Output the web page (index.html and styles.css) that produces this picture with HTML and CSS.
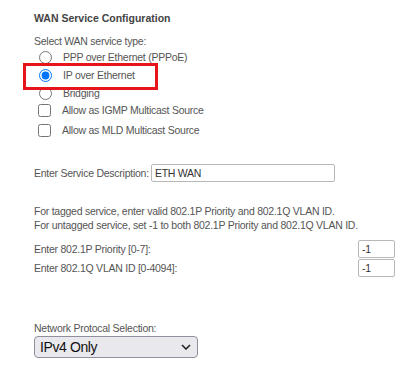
FILE: index.html
```html
<!DOCTYPE html>
<html>
<head>
<meta charset="utf-8">
<link rel="stylesheet" href="styles.css">
</head>
<body>
<div class="page">
  <div class="title">WAN Service Configuration</div>
  <div class="label-line">Select WAN service type:</div>
  <div class="options">
    <label class="opt radio-row"><input type="radio" name="svc"><span>PPP over Ethernet (PPPoE)</span></label>
    <label class="opt radio-row"><input type="radio" name="svc" checked><span>IP over Ethernet</span></label>
    <label class="opt radio-row"><input type="radio" name="svc"><span>Bridging</span></label>
    <label class="opt check-row"><input type="checkbox"><span>Allow as IGMP Multicast Source</span></label>
    <label class="opt check-row"><input type="checkbox"><span>Allow as MLD Multicast Source</span></label>
    <div class="highlight"></div>
  </div>

  <div class="desc-row">
    <span>Enter Service Description:</span>
    <input class="text desc" type="text" value="ETH WAN">
  </div>

  <div class="note">
    <div>For tagged service, enter valid 802.1P Priority and 802.1Q VLAN ID.</div>
    <div>For untagged service, set -1 to both 802.1P Priority and 802.1Q VLAN ID.</div>
  </div>

  <div class="vlan">
    <div class="vrow"><span>Enter 802.1P Priority [0-7]:</span><input class="text small" type="text" value="-1"></div>
    <div class="vrow"><span>Enter 802.1Q VLAN ID [0-4094]:</span><input class="text small" type="text" value="-1"></div>
  </div>

  <div class="proto">
    <div class="proto-label">Network Protocal Selection:</div>
    <div class="select">
      <span>IPv4 Only</span>
      <svg class="chev" width="10" height="6" viewBox="0 0 10 6"><path d="M1 1 L5 5 L9 1" fill="none" stroke="#222" stroke-width="1.6"/></svg>
    </div>
  </div>
</div>
</body>
</html>
```

FILE: styles.css
```css
* { box-sizing: border-box; }
html, body { margin: 0; padding: 0; background: #fff; }
body {
  font-family: "Liberation Sans", Arial, sans-serif;
  font-size: 10.5px;
  letter-spacing: -0.25px;
  color: #555;
  line-height: 14px;
}
.page {
  padding: 11px 0 0 34px;
  width: 418px;
}
.title {
  font-weight: bold;
  color: #444;
  letter-spacing: 0;
  height: 14px;
}
.label-line {
  margin-top: 9px;
  height: 14px;
}
.options {
  position: relative;
}
.opt {
  display: flex;
  align-items: center;
}
.radio-row { height: 18px; }
.check-row { height: 20px; }
.radio-row input {
  width: 13px;
  height: 13px;
  margin: 0 11px 0 5px;
}
.check-row input {
  width: 13px;
  height: 13px;
  margin: 0 11px 0 4px;
}
.check-row:nth-child(4) { margin-top: -2px; }
.highlight {
  position: absolute;
  left: -11px;
  top: 15px;
  width: 135px;
  height: 27px;
  border: 3px solid #e8141c;
}
.desc-row {
  display: flex;
  align-items: center;
  margin-top: 24px;
  height: 18px;
}
.text {
  font-family: "Liberation Sans", Arial, sans-serif;
  font-size: 10.5px;
  letter-spacing: -0.25px;
  color: #333;
  border: 1px solid #b8b8b8;
  border-radius: 2px;
  padding: 0 3px;
  height: 18px;
  outline: none;
}
.desc {
  width: 184px;
  margin-left: 2px;
}
.note {
  margin-top: 22px;
}
.vlan {
  margin-top: 8px;
  width: 361px;
}
.vrow {
  display: flex;
  justify-content: space-between;
  align-items: center;
  height: 18px;
}
.vrow + .vrow { margin-top: 1px; }
.small { width: 37px; }
.proto {
  margin-top: 44px;
}
.proto-label {
  height: 14px;
}
.select {
  margin-top: 1px;
  width: 164px;
  height: 22px;
  background: #e9e9ed;
  border: 1px solid #8f8f9d;
  border-radius: 4px;
  display: flex;
  align-items: center;
  justify-content: space-between;
  padding: 0 6px 0 5px;
  font-size: 14px;
  letter-spacing: -0.4px;
  color: #111;
}
.chev { display: block; }
```
